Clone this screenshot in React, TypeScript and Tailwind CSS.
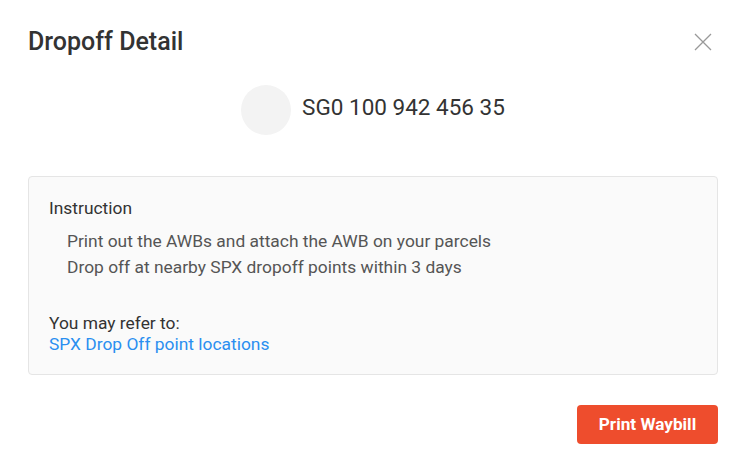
export default function App() {
  return (
    <div className="w-[742px] h-[461px] bg-white font-['Roboto',sans-serif] text-[#333] pl-[28px] pr-[24px] pt-[28px]">
      <div className="flex items-center justify-between h-[28px]">
        <h1 className="text-[25px] leading-[28px] font-medium text-[#333]">Dropoff Detail</h1>
        <button className="mr-[6px] text-[#999]" aria-label="close">
          <svg width="18" height="18" viewBox="0 0 18 18" fill="none" stroke="currentColor" strokeWidth="1.3">
            <path d="M1 1L17 17M17 1L1 17" />
          </svg>
        </button>
      </div>

      <div className="mt-[29px] flex items-center justify-center gap-[11px]">
        <div className="w-[50px] h-[50px] rounded-full bg-[#f3f3f3]" />
        <span className="mb-[6px] text-[22.5px] leading-[28px] text-[#333]">SG0 100 942 456 35</span>
      </div>

      <div className="mt-[41px] rounded-[4px] border border-[#e5e5e5] bg-[#fafafa] px-[20px] pt-[19px] pb-[19px]">
        <p className="text-[17.4px] leading-[24px] text-[#333]">Instruction</p>
        <ul className="mt-[8px] pl-[18px] text-[17.4px] leading-[26px] text-[#555]">
          <li>Print out the AWBs and attach the AWB on your parcels</li>
          <li>Drop off at nearby SPX dropoff points within 3 days</li>
        </ul>
        <p className="mt-[33px] text-[17.4px] leading-[21px] text-[#333]">You may refer to:</p>
        <a href="#" className="block text-[17.4px] leading-[21px] text-[#2a8ff0]">SPX Drop Off point locations</a>
      </div>

      <div className="mt-[30px] flex justify-end">
        <button className="h-[39px] w-[141px] rounded-[4px] bg-[#ee4d2d] text-[17.2px] font-bold text-white">
          Print Waybill
        </button>
      </div>
    </div>
  );
}
